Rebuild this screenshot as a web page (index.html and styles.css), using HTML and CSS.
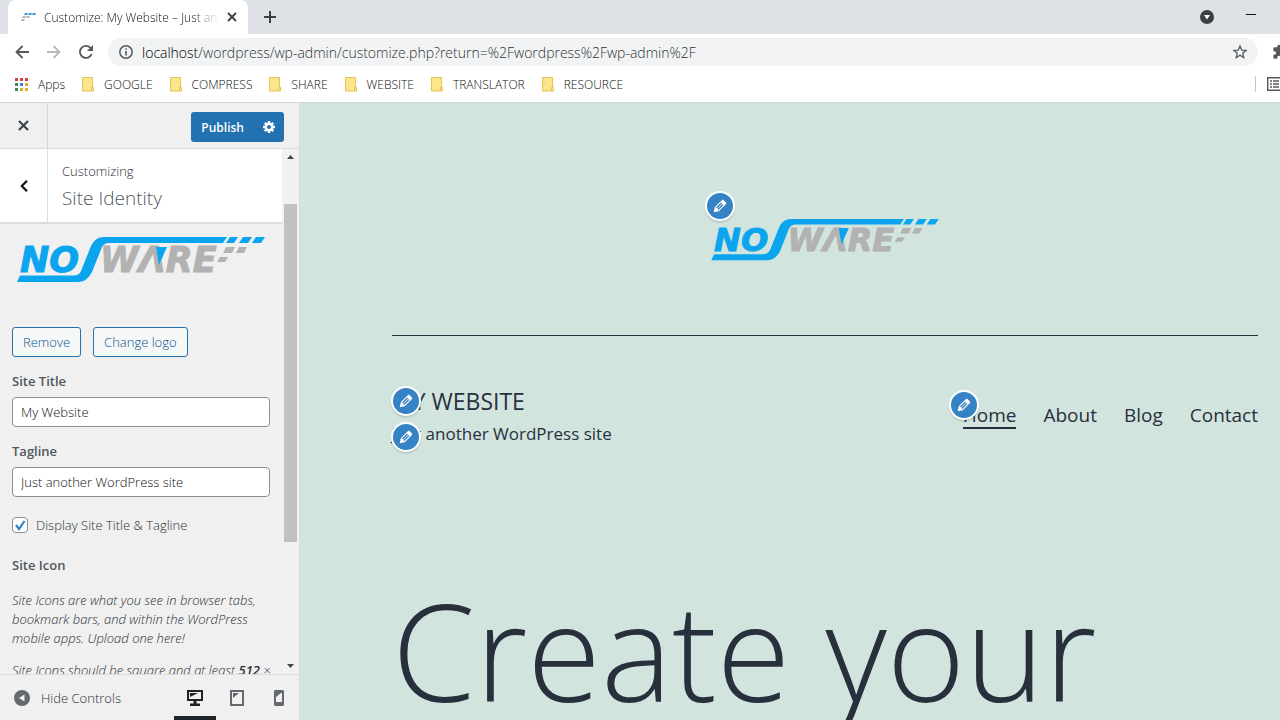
FILE: index.html
```html
<!DOCTYPE html>
<html lang="en">
<head>
<meta charset="utf-8">
<title>Customize: My Website – Just another WordPress site</title>
<link rel="stylesheet" href="styles.css">
</head>
<body>
<svg class="defs" aria-hidden="true">
  <symbol id="logo" viewBox="0 0 250 48">
    <g fill="#0aa5ee">
      <path d="M1 46 L4 39.500 H58 Q63 39.500 65 35 L75 10 Q79 1 88 1 H211 L207 7 H93 Q88 7 86 11 L76 36 Q71 46 62 46 Z"/>
      <path d="M214 1 h8 l-4 6 h-8z M227 1 h9 l-4 6 h-9z M240 1 h9 l-4 6 h-9z"/>
      <text class="logo-word word-blue" x="4" y="36">NO</text>
    </g>
    <g fill="#b2b2b2">
      <text class="logo-word word-grey" x="84" y="36">WΛRE</text>
      <path d="M210 11 h9 l-3 6 h-9z M223 11 h8 l-3 6 h-8z M204 21 h8 l-3 5 h-8z"/>
    </g>
    <path d="M140 11 H151 L143 29 Z" fill="#0aa5ee"/>
  </symbol>
  <symbol id="folder" viewBox="0 0 12 15">
    <path d="M.5 .5 h10 v9.500 h1 v4 h-11z" fill="#fde58c" stroke="#e3c352"/>
    <path d="M9.500 14 v-4" stroke="#e3c352" fill="none"/>
  </symbol>
  <symbol id="pencil" viewBox="0 0 20 20">
    <path fill="#fff" fill-rule="evenodd" d="M13.890 3.390l2.710 2.720c.46.460.42 1.240.03 1.640l-8.010 8.020-5.560 1.160 1.160-5.580s7.600-7.630 7.990-8.030c.39-.39 1.220-.39 1.680.07zm-2.730 2.790l-5.590 5.610 1.110 1.110 5.540-5.650zm-2.970 8.230l5.580-5.600-1.070-1.080-5.590 5.600z"/>
  </symbol>
</svg>

<div class="browser">
  <header class="chrome">
    <div class="tabstrip">
      <div class="tab">
        <svg class="favicon" viewBox="0 0 16 10"><path d="M5 1h3l-1 2h-3zM9 1h3l-1 2h-3zM13 1h3l-1 2h-3z" fill="#2f9bd0"/><path d="M3 4h3l-1 2h-3zM7 4h3l-1 2h-3zM2 7h3l-1 2h-3z" fill="#a9b4bb"/></svg>
        <span class="tab-title">Customize: My Website – Just another</span>
        <button class="plain" aria-label="Close tab"><svg width="10" height="10" viewBox="0 0 10 10"><path d="M1 1l8 8M9 1l-8 8" stroke="#3c4043" stroke-width="1.800"/></svg></button>
      </div>
      <button class="plain new-tab" aria-label="New tab"><svg width="12" height="12" viewBox="0 0 12 12"><path d="M6 0v12M0 6h12" stroke="#3c4043" stroke-width="2"/></svg></button>
      <div class="window-controls">
        <button class="plain" aria-label="Search tabs"><svg width="14" height="14" viewBox="0 0 14 14"><circle cx="7" cy="7" r="7" fill="#3c4043"/><path d="M4 5h6l-3 4.500z" fill="#fff"/></svg></button>
        <button class="plain" aria-label="Minimize"><svg width="10" height="6" viewBox="0 0 10 6"><path d="M0 .5h10" stroke="#111" stroke-width="1"/></svg></button>
      </div>
    </div>
    <div class="toolbar">
      <button class="plain" aria-label="Back"><svg width="14" height="14" viewBox="0 0 14 14"><path d="M14 7H1.500M7.500 1L1.500 7l6 6" fill="none" stroke="#55595d" stroke-width="1.800"/></svg></button>
      <button class="plain" aria-label="Forward"><svg width="14" height="14" viewBox="0 0 14 14"><path d="M0 7h12.500M6.500 1l6 6-6 6" fill="none" stroke="#b6b8ba" stroke-width="1.800"/></svg></button>
      <button class="plain" aria-label="Reload"><svg width="14" height="14" viewBox="0 0 14 14"><path d="M12.600 9A6 6 0 1 1 11.500 3" fill="none" stroke="#55595d" stroke-width="1.800"/><path d="M14 0v6H8z" fill="#55595d"/></svg></button>
      <div class="omnibox">
        <svg width="14" height="14" viewBox="0 0 14 14"><circle cx="7" cy="7" r="6.200" fill="none" stroke="#55595d" stroke-width="1.500"/><path d="M7 6v4.500M7 3.200v1.600" stroke="#55595d" stroke-width="1.600"/></svg>
        <a class="url" href="#"><b>localhost</b>/wordpress/wp-admin/customize.php?return=%2Fwordpress%2Fwp-admin%2F</a>
        <button class="plain" aria-label="Bookmark"><svg width="14" height="14" viewBox="0 0 14 14"><path d="M7 1l1.700 4.100 4.400.3-3.400 2.900 1.100 4.300L7 10.300l-3.800 2.300 1.100-4.300L.9 5.400l4.400-.3z" fill="none" stroke="#55595d" stroke-width="1.300"/></svg></button>
      </div>
      <button class="plain extensions" aria-label="Extensions"><svg width="16" height="16" viewBox="0 0 24 24"><path fill="#55595d" d="M20.500 11H19V7c0-1.100-.9-2-2-2h-4V3.500a2.500 2.500 0 0 0-5 0V5H4c-1.100 0-2 .9-2 2v3.800h1.500a2.700 2.700 0 0 1 0 5.400H2V20c0 1.100.9 2 2 2h3.800v-1.500a2.700 2.700 0 0 1 5.400 0V22H17c1.100 0 2-.9 2-2v-4h1.500a2.500 2.500 0 0 0 0-5z"/></svg></button>
    </div>
    <nav class="bookmarks">
      <a href="#"><svg class="apps" viewBox="0 0 13 13"><g fill="#d0443e"><path d="M0 0h3v3H0zM5 0h3v3H5zM10 0h3v3h-3z"/></g><path d="M0 5h3v3H0zM0 10h3v3H0z" fill="#2f9252"/><path d="M5 5h3v3H5z" fill="#3f7fe0"/><path d="M10 5h3v3h-3zM5 10h3v3H5zM10 10h3v3h-3z" fill="#e0b02c"/></svg>Apps</a>
      <a href="#"><svg class="folder"><use href="#folder"/></svg>GOOGLE</a>
      <a href="#"><svg class="folder"><use href="#folder"/></svg>COMPRESS</a>
      <a href="#"><svg class="folder"><use href="#folder"/></svg>SHARE</a>
      <a href="#"><svg class="folder"><use href="#folder"/></svg>WEBSITE</a>
      <a href="#"><svg class="folder"><use href="#folder"/></svg>TRANSLATOR</a>
      <a href="#"><svg class="folder"><use href="#folder"/></svg>RESOURCE</a>
      <button class="plain reading-list" aria-label="Reading list"><svg width="13" height="14" viewBox="0 0 13 14"><path d="M.7 .7h16v12.600H.7z" fill="none" stroke="#55595d" stroke-width="1.400"/><path d="M3 4h2M3 7h2M3 10h2M6 4h6M6 7h6M6 10h6" stroke="#55595d" stroke-width="1.500"/></svg></button>
    </nav>
  </header>

  <div class="customizer">
    <aside class="sidebar">
      <div class="actions">
        <button class="plain close" aria-label="Close customizer"><svg width="11" height="11" viewBox="0 0 11 11"><path d="M1 1l9 9M10 1l-9 9" stroke="#3c434a" stroke-width="2.200"/></svg></button>
        <div class="publish-group">
          <button class="publish">Publish</button>
          <button class="settings" aria-label="Publish settings"><svg width="12" height="12" viewBox="0 0 12 12"><g stroke="#fff" stroke-width="2.600"><path d="M6 0v12M0 6h12M1.800 1.800l8.400 8.400M10.200 1.800l-8.400 8.400"/></g><circle cx="6" cy="6" r="4.300" fill="#fff"/><circle cx="6" cy="6" r="2" fill="#2271b1"/></svg></button>
        </div>
      </div>
      <div class="scroller">
        <div class="panel">
          <div class="panel-head">
            <button class="plain back" aria-label="Back"><svg width="8" height="12" viewBox="0 0 8 12"><path d="M7 .8L1.800 6 7 11.200" fill="none" stroke="#111" stroke-width="2.200"/></svg></button>
            <div class="panel-title"><span>Customizing</span><h1>Site Identity</h1></div>
          </div>
          <div class="controls">
            <svg class="logo-thumb" role="img" aria-label="Logo"><use href="#logo"/></svg>
            <div class="button-row"><button class="outline">Remove</button><button class="outline">Change logo</button></div>
            <div class="field"><label for="title">Site Title</label><input id="title" type="text" value="My Website"></div>
            <div class="field"><label for="tag">Tagline</label><input id="tag" type="text" value="Just another WordPress site"></div>
            <div class="check"><input id="show" type="checkbox" checked><label for="show">Display Site Title &amp; Tagline</label></div>
            <h2>Site Icon</h2>
            <p>Site Icons are what you see in browser tabs, bookmark bars, and within the WordPress mobile apps. Upload one here!</p>
            <p class="size-hint">Site Icons should be square and at least <strong>512</strong> ×</p>
          </div>
        </div>
        <div class="scrollbar">
          <svg width="7" height="4" viewBox="0 0 7 4"><path d="M0 4L3.500 0 7 4z" fill="#444"/></svg>
          <div class="track"><div class="thumb"></div></div>
          <svg width="7" height="4" viewBox="0 0 7 4"><path d="M0 0h7L3.500 4z" fill="#444"/></svg>
        </div>
      </div>
      <footer class="side-foot">
        <button class="plain collapse"><svg width="16" height="16" viewBox="0 0 16 16"><circle cx="8" cy="8" r="8" fill="#646970"/><path d="M10.500 4.500v7L5 8z" fill="#f0f0f1"/></svg>Hide Controls</button>
        <div class="devices">
          <button class="plain active" aria-label="Desktop"><svg width="16" height="16" viewBox="0 0 16 16"><path d="M1 1h14v9H1z" fill="none" stroke="#1d2327" stroke-width="2"/><path d="M3 3h8L3 7z" fill="#1d2327"/><path d="M6.500 10h3v4h-3zM3 13.500h10V16H3z" fill="#1d2327"/></svg></button>
          <button class="plain" aria-label="Tablet"><svg width="14" height="16" viewBox="0 0 14 16"><path d="M1 1h12v14H1z" fill="none" stroke="#646970" stroke-width="2"/><path d="M3 3h6L3 8z" fill="#646970"/></svg></button>
          <button class="plain" aria-label="Mobile"><svg width="10" height="16" viewBox="0 0 10 16"><path fill="#646970" fill-rule="evenodd" d="M1 0h8l1 1v14l-1 1H1l-1-1V1zM2 3v9h6V3z"/><path d="M2 3h5L2 7z" fill="#646970"/></svg></button>
        </div>
      </footer>
    </aside>

    <main class="preview">
      <div class="brand-logo">
        <svg class="site-logo" role="img" aria-label="Logo"><use href="#logo"/></svg>
        <button class="edit edit-logo" aria-label="Edit logo"><svg><use href="#pencil"/></svg></button>
      </div>
      <div class="site-header">
        <div class="branding">
          <div class="editable site-name">MY WEBSITE<button class="edit" aria-label="Edit title"><svg><use href="#pencil"/></svg></button></div>
          <div class="editable site-desc">Just another WordPress site<button class="edit" aria-label="Edit tagline"><svg><use href="#pencil"/></svg></button></div>
        </div>
        <nav class="menu">
          <a class="current" href="#">Home</a><a href="#">About</a><a href="#">Blog</a><a href="#">Contact</a>
          <button class="edit edit-menu" aria-label="Edit menu"><svg><use href="#pencil"/></svg></button>
        </nav>
      </div>
      <h2 class="hero">Create your</h2>
    </main>
  </div>
</div>
</body>
</html>
```
FILE: styles.css
```css
* { box-sizing: border-box; }
body { margin: 0; font-family: "Open Sans", "Noto Sans", sans-serif; font-size: 12px; }
button, input { font: inherit; }
a { color: inherit; text-decoration: none; }
h1, h2, p { margin: 0; font-weight: inherit; }
svg { flex: none; }
.defs { position: absolute; width: 0; height: 0; }
.plain { display: flex; align-items: center; justify-content: center; padding: 0; border: 0; background: none; color: inherit; }
.logo-word { font: italic 700 35px "DejaVu Sans", sans-serif; }
.word-blue { stroke: #0aa5ee; }
.word-grey { stroke: #b2b2b2; }

.browser { display: flex; flex-direction: column; height: 100vh; overflow: hidden; }

.chrome { flex: none; background: #fff; border-bottom: 1px solid #d5d8da; color: #101214; font-weight: 300; }
.tabstrip { display: flex; align-items: center; height: 34px; padding-left: 8px; background: #dee1e6; }
.tab { display: flex; align-items: center; width: 240px; height: 34px; padding: 0 11px 0 12px; background: #fff; border-radius: 8px 8px 0 0; }
.favicon { width: 16px; height: 10px; margin-right: 8px; }
.tab-title { flex: 1; overflow: hidden; white-space: nowrap; margin-right: 8px; mask-image: linear-gradient(to right, #000 85%, transparent); }
.new-tab { margin-left: 16px; }
.window-controls { display: flex; align-items: center; gap: 32px; margin-left: auto; padding-right: 24px; }
.toolbar { display: flex; align-items: center; gap: 18px; height: 36px; padding-left: 15px; overflow: hidden; }
.omnibox { display: flex; flex: 1; align-items: center; gap: 9px; height: 28px; margin-left: -3px; padding: 0 11px; border-radius: 14px; background: #f1f3f4; }
.url { flex: 1; font-size: 14px; color: #303336; white-space: nowrap; }
.url b { font-weight: 300; color: #000; }
.extensions { width: 8px; margin-left: -4px; justify-content: flex-start; overflow: hidden; }
.bookmarks { display: flex; align-items: center; height: 32px; padding: 0 0 4px 15px; gap: 17px; }
.bookmarks a { display: flex; align-items: center; gap: 10px; }
.apps { width: 13px; height: 13px; }
.folder { width: 12px; height: 15px; }
.reading-list { height: 16px; margin-left: auto; padding-left: 11px; border-left: 1px solid #c4c7ca; }

.customizer { display: flex; flex: 1; min-height: 0; }
.sidebar { display: flex; flex: none; flex-direction: column; width: 300px; background: #f0f0f1; border-right: 1px solid #dcdcde; color: #2c3034; font-size: 13px; font-weight: 300; }
.actions { display: flex; flex: none; height: 46px; align-items: center; justify-content: space-between; padding-right: 15px; border-bottom: 1px solid #dcdcde; }
.close { width: 48px; height: 45px; border-right: 1px solid #d5d7d9; }
.publish-group { display: flex; height: 30px; margin-top: 3px; }
.publish-group button { padding: 0 10px; border: 0; background: #2271b1; color: #fff; font-size: 12px; font-weight: 600; }
.publish-group .publish { border-radius: 3px 0 0 3px; }
.publish-group .settings { display: flex; align-items: center; padding: 0 9px; border-radius: 0 3px 3px 0; }

.scroller { display: flex; flex: 1; min-height: 0; }
.panel { flex: 1; min-width: 0; overflow: hidden; }
.panel-head { display: flex; height: 75px; background: #fff; border-bottom: 2px solid #dcdcde; }
.back { width: 48px; border-right: 1px solid #dcdcde; }
.panel-title { padding: 12px 14px; line-height: 20px; }
.panel-title h1 { font-size: 19px; line-height: 34px; color: #50575e; }
.controls { display: flex; flex-direction: column; padding: 12px; }
.logo-thumb { width: 250px; height: 48px; margin-left: 4px; }
.button-row { display: flex; gap: 12px; margin-top: 43px; }
.outline { height: 30px; padding: 0 10px; border: 1px solid #2271b1; border-radius: 3px; background: #f6f7f7; color: #0a5590; }
.field { display: flex; flex-direction: column; gap: 4px; margin-top: 12px; }
.field label, .controls h2 { font-size: 13px; line-height: 24px; font-weight: 600; color: #50575e; }
.field input { width: 100%; height: 30px; padding: 0 8px; border: 1px solid #8c8f94; border-radius: 4px; background: #fff; color: #101214; }
.check { display: flex; align-items: center; gap: 8px; margin-top: 18px; line-height: 20px; }
.check input { appearance: none; width: 16px; height: 16px; margin: 0; border: 1px solid #8c8f94; border-radius: 4px; background: #fff url("data:image/svg+xml,%3Csvg xmlns='http://www.w3.org/2000/svg' viewBox='0 0 14 14'%3E%3Cpath d='M3 7l3 4 5.500-8' fill='none' stroke='%233582c4' stroke-width='2.200'/%3E%3C/svg%3E") center / 14px; }
.controls h2 { margin-top: 18px; }
.controls p { margin-top: 13px; font-style: italic; line-height: 19px; }
.controls h2 + p { margin-top: 14px; }
.size-hint { white-space: nowrap; }
.size-hint strong { font-weight: 600; }
.scrollbar { display: flex; flex: none; flex-direction: column; align-items: center; width: 17px; padding: 6px 0; background: #f1f1f1; }
.track { flex: 1; width: 13px; padding: 45px 0 122px; }
.thumb { height: 100%; background: #c1c1c1; }

.side-foot { display: flex; flex: none; align-items: center; justify-content: space-between; height: 46px; padding: 0 0 0 14px; border-top: 1px solid #dcdcde; }
.collapse { gap: 11px; padding-top: 1px; }
.devices { display: flex; height: 100%; margin-right: -1px; }
.devices button { width: 42px; border-bottom: 4px solid transparent; padding-top: 4px; }
.devices .active { border-color: #1d2327; }

.preview { flex: 1; min-width: 0; padding: 0 22px 0 92px; overflow: hidden; background: #d1e4dd; color: #28303d; }
.brand-logo { position: relative; display: flex; justify-content: center; padding: 115px 0 73px; border-bottom: 1px solid #28303d; }
.site-logo { width: 230px; height: 44px; }
.edit { position: absolute; display: flex; align-items: center; justify-content: center; width: 30px; height: 30px; padding: 0; border: 2px solid #fff; border-radius: 50%; background: #3582c4; box-shadow: 0 2px 1px rgba(60, 67, 74, .15); left: -1px; top: 3px; }
.edit svg { width: 18px; height: 18px; }
.edit-logo { left: calc(50% - 120px); top: 88px; }
.site-header { display: flex; justify-content: space-between; align-items: center; padding-top: 47px; }
.editable { position: relative; }
.site-name { font-size: 23px; line-height: 36px; }
.site-desc { font-size: 17px; line-height: 30px; }
.menu { position: relative; display: flex; gap: 27px; font-size: 19px; line-height: 24px; }
.menu .current { border-bottom: 2px solid #28303d; }
.edit-menu { left: -14px; top: -13px; }
.hero { margin-top: 106px; font-size: 134px; line-height: 190px; font-weight: 300; white-space: nowrap; }
```
